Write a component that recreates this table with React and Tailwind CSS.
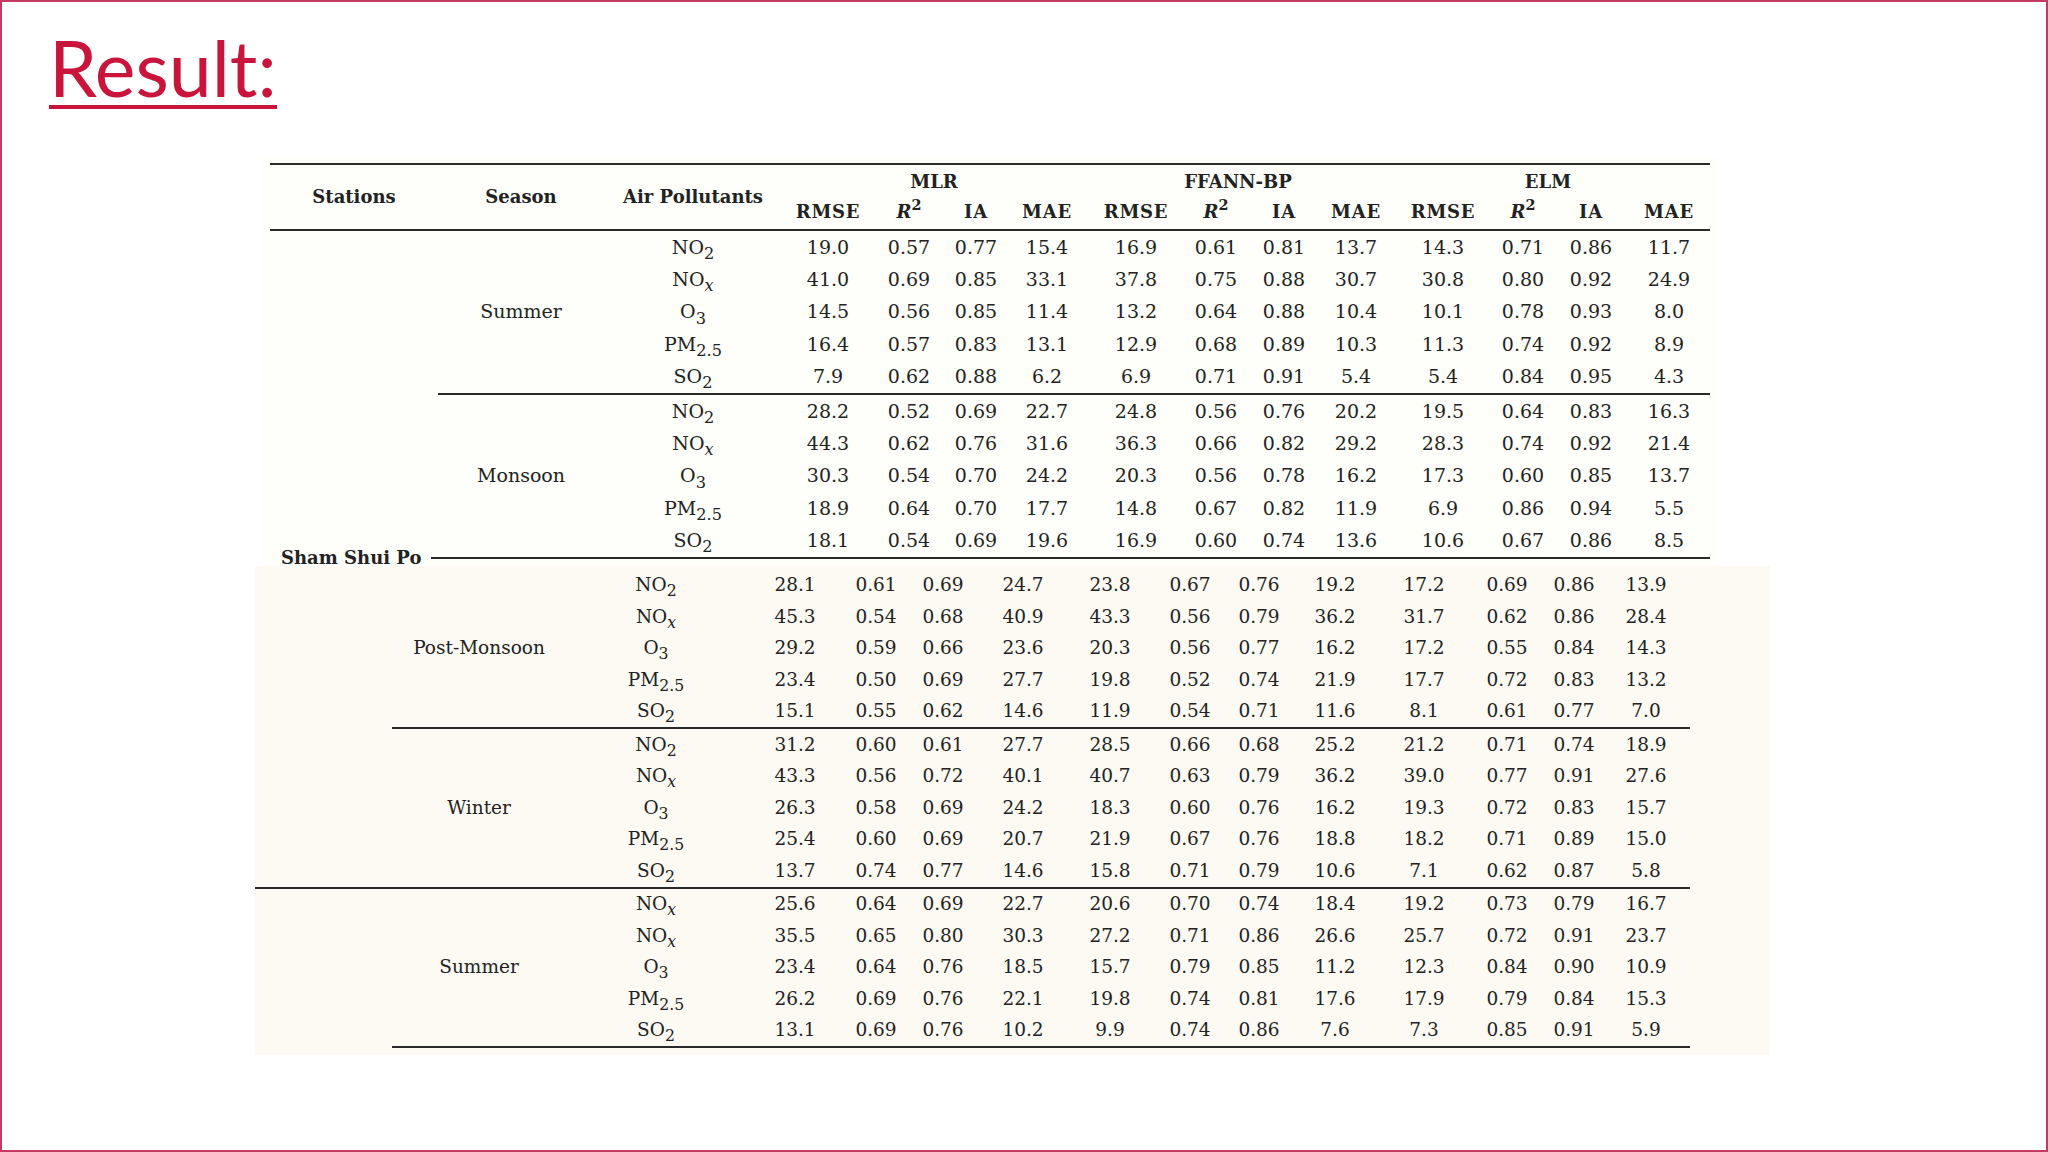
import React from "react";

const serif = { fontFamily: '"DejaVu Serif", "Liberation Serif", serif' };

function Pol({ p }) {
  const sub = (t, it) => (
    <sub className={"text-[85%] bottom-[-0.32em]" + (it ? " italic" : "")}>{t}</sub>
  );
  if (p === "NO2") return <span>NO{sub("2")}</span>;
  if (p === "NOx") return <span>NO{sub("x", true)}</span>;
  if (p === "O3") return <span>O{sub("3")}</span>;
  if (p === "PM25") return <span>PM{sub("2.5")}</span>;
  return <span>SO{sub("2")}</span>;
}

const R2 = () => (
  <span>
    <span className="italic">R</span>
    <sup className="text-[80%] top-[-0.55em]">2</sup>
  </span>
);

const topGroups = [
  {
    season: "Summer",
    rows: [
      ["NO2", "19.0 0.57 0.77 15.4 16.9 0.61 0.81 13.7 14.3 0.71 0.86 11.7"],
      ["NOx", "41.0 0.69 0.85 33.1 37.8 0.75 0.88 30.7 30.8 0.80 0.92 24.9"],
      ["O3", "14.5 0.56 0.85 11.4 13.2 0.64 0.88 10.4 10.1 0.78 0.93 8.0"],
      ["PM25", "16.4 0.57 0.83 13.1 12.9 0.68 0.89 10.3 11.3 0.74 0.92 8.9"],
      ["SO2", "7.9 0.62 0.88 6.2 6.9 0.71 0.91 5.4 5.4 0.84 0.95 4.3"],
    ],
  },
  {
    season: "Monsoon",
    rows: [
      ["NO2", "28.2 0.52 0.69 22.7 24.8 0.56 0.76 20.2 19.5 0.64 0.83 16.3"],
      ["NOx", "44.3 0.62 0.76 31.6 36.3 0.66 0.82 29.2 28.3 0.74 0.92 21.4"],
      ["O3", "30.3 0.54 0.70 24.2 20.3 0.56 0.78 16.2 17.3 0.60 0.85 13.7"],
      ["PM25", "18.9 0.64 0.70 17.7 14.8 0.67 0.82 11.9 6.9 0.86 0.94 5.5"],
      ["SO2", "18.1 0.54 0.69 19.6 16.9 0.60 0.74 13.6 10.6 0.67 0.86 8.5"],
    ],
  },
];

const bottomGroups = [
  {
    season: "Post-Monsoon",
    rows: [
      ["NO2", "28.1 0.61 0.69 24.7 23.8 0.67 0.76 19.2 17.2 0.69 0.86 13.9"],
      ["NOx", "45.3 0.54 0.68 40.9 43.3 0.56 0.79 36.2 31.7 0.62 0.86 28.4"],
      ["O3", "29.2 0.59 0.66 23.6 20.3 0.56 0.77 16.2 17.2 0.55 0.84 14.3"],
      ["PM25", "23.4 0.50 0.69 27.7 19.8 0.52 0.74 21.9 17.7 0.72 0.83 13.2"],
      ["SO2", "15.1 0.55 0.62 14.6 11.9 0.54 0.71 11.6 8.1 0.61 0.77 7.0"],
    ],
  },
  {
    season: "Winter",
    rows: [
      ["NO2", "31.2 0.60 0.61 27.7 28.5 0.66 0.68 25.2 21.2 0.71 0.74 18.9"],
      ["NOx", "43.3 0.56 0.72 40.1 40.7 0.63 0.79 36.2 39.0 0.77 0.91 27.6"],
      ["O3", "26.3 0.58 0.69 24.2 18.3 0.60 0.76 16.2 19.3 0.72 0.83 15.7"],
      ["PM25", "25.4 0.60 0.69 20.7 21.9 0.67 0.76 18.8 18.2 0.71 0.89 15.0"],
      ["SO2", "13.7 0.74 0.77 14.6 15.8 0.71 0.79 10.6 7.1 0.62 0.87 5.8"],
    ],
  },
  {
    season: "Summer",
    rows: [
      ["NOx", "25.6 0.64 0.69 22.7 20.6 0.70 0.74 18.4 19.2 0.73 0.79 16.7"],
      ["NOx", "35.5 0.65 0.80 30.3 27.2 0.71 0.86 26.6 25.7 0.72 0.91 23.7"],
      ["O3", "23.4 0.64 0.76 18.5 15.7 0.79 0.85 11.2 12.3 0.84 0.90 10.9"],
      ["PM25", "26.2 0.69 0.76 22.1 19.8 0.74 0.81 17.6 17.9 0.79 0.84 15.3"],
      ["SO2", "13.1 0.69 0.76 10.2 9.9 0.74 0.86 7.6 7.3 0.85 0.91 5.9"],
    ],
  },
];

const cell = "flex items-center justify-center whitespace-nowrap";

function TopGroup({ g }) {
  return (
    <div className="grid grid-cols-[168px_166px_178px_92px_70px_64px_78px_100px_60px_76px_68px_106px_54px_82px_74px] grid-rows-[repeat(5,32.4px)] text-[19px] leading-none">
      <div className="col-start-1 row-start-1 row-span-5" />
      <div className={cell + " col-start-2 row-start-1 row-span-5"}>{g.season}</div>
      {g.rows.map(([p, vals], i) => (
        <React.Fragment key={i}>
          <div className={cell}>
            <Pol p={p} />
          </div>
          {vals.split(" ").map((v, j) => (
            <div key={j} className={cell}>
              {v}
            </div>
          ))}
        </React.Fragment>
      ))}
    </div>
  );
}

function BottomGroup({ g }) {
  return (
    <div className="grid grid-cols-[137px_174px_180px_98px_64px_70px_90px_84px_76px_62px_90px_88px_78px_56px_88px] grid-rows-[repeat(5,31.5px)] text-[18.5px] leading-none">
      <div className="col-start-1 row-start-1 row-span-5" />
      <div className={cell + " col-start-2 row-start-1 row-span-5"}>{g.season}</div>
      {g.rows.map(([p, vals], i) => (
        <React.Fragment key={i}>
          <div className={cell}>
            <Pol p={p} />
          </div>
          {vals.split(" ").map((v, j) => (
            <div key={j} className={cell}>
              {v}
            </div>
          ))}
        </React.Fragment>
      ))}
    </div>
  );
}

const line = "h-[2px] bg-[#2a2a2a]";

export default function App() {
  return (
    <div className="w-[2048px] h-[1152px] bg-white border-2 border-[#c43a62] overflow-hidden flex flex-col">
      <div className="ml-[47px] mt-[28px]">
        <span
          className="inline-block text-[77px] leading-[75px] font-normal text-[#c9153b] border-b-[4px] border-[#c9153b]"
          style={{ fontFamily: 'Lato, "Open Sans", sans-serif' }}
        >
          Result:
        </span>
      </div>

      {/* top part of table */}
      <div
        className="ml-[260px] mt-[48px] w-[1456px] bg-[#fefefa] px-[8px] pt-[6px] pb-[6px] text-[#222]"
        style={serif}
      >
        <div className={line} />
        <div className="grid grid-cols-[168px_166px_178px_92px_70px_64px_78px_100px_60px_76px_68px_106px_54px_82px_74px] grid-rows-[29px_35px] text-[18px] font-bold leading-none">
          <div className={cell + " row-span-2 col-start-1 row-start-1"}>Stations</div>
          <div className={cell + " row-span-2 col-start-2 row-start-1"}>Season</div>
          <div className={cell + " row-span-2 col-start-3 row-start-1"}>Air Pollutants</div>
          <div className={cell + " col-start-4 col-span-4 row-start-1 pt-[4px]"}>MLR</div>
          <div className={cell + " col-start-8 col-span-4 row-start-1 pt-[4px]"}>FFANN-BP</div>
          <div className={cell + " col-start-12 col-span-4 row-start-1 pt-[4px]"}>ELM</div>
          {[0, 1, 2].map((k) => (
            <React.Fragment key={k}>
              <div className={cell + " row-start-2 tracking-[0.04em]"}>RMSE</div>
              <div className={cell + " row-start-2"}>
                <R2 />
              </div>
              <div className={cell + " row-start-2 tracking-[0.04em]"}>IA</div>
              <div className={cell + " row-start-2 tracking-[0.04em]"}>MAE</div>
            </React.Fragment>
          ))}
        </div>
        <div className={line} />
        <TopGroup g={topGroups[0]} />
        <div className={"ml-[168px] " + line} />
        <TopGroup g={topGroups[1]} />
        <div className="flex items-center h-[2px]">
          <span className="pl-[11px] pr-[10px] text-[18px] font-bold leading-none whitespace-nowrap">
            Sham Shui Po
          </span>
          <div className={"flex-1 " + line} />
        </div>
      </div>

      {/* bottom part of table */}
      <div
        className="ml-[253px] mt-[1px] w-[1515px] bg-[#fcfaf3] pt-[4px] pb-[7px] pr-[80px] text-[#222]"
        style={serif}
      >
        <BottomGroup g={bottomGroups[0]} />
        <div className={"ml-[137px] " + line} />
        <BottomGroup g={bottomGroups[1]} />
        <div className={line} />
        <BottomGroup g={bottomGroups[2]} />
        <div className={"ml-[137px] " + line} />
      </div>
    </div>
  );
}
